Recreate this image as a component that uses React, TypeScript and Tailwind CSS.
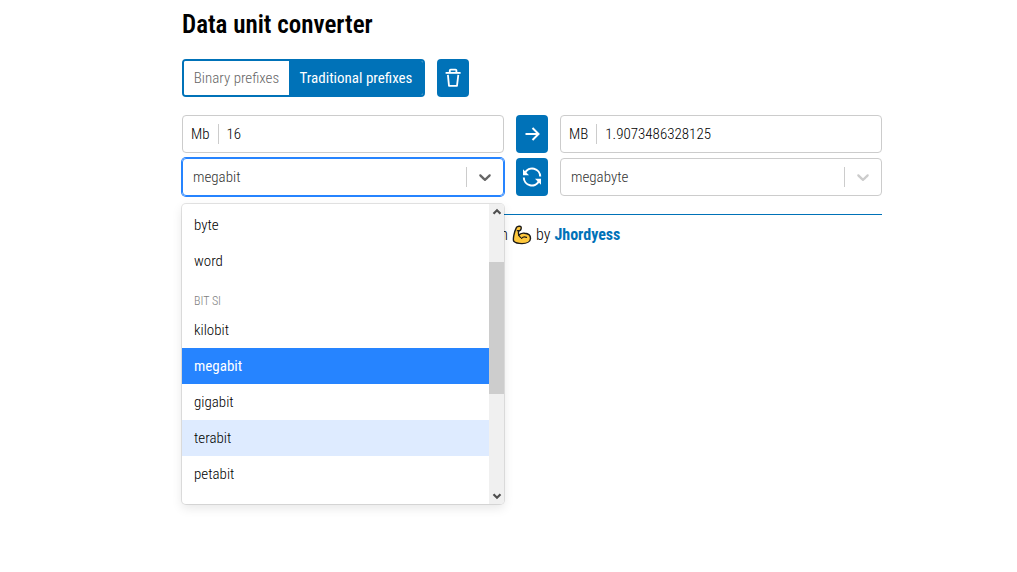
import { useEffect, useRef, useState } from "react"

const unitGroups = [
  {
    label: "Basic",
    units: ["bit", "nibble", "byte", "word"],
  },
  {
    label: "Bit SI",
    units: ["kilobit", "megabit", "gigabit", "terabit", "petabit", "exabit"],
  },
  {
    label: "Byte SI",
    units: ["kilobyte", "megabyte", "gigabyte"],
  },
]

const MENU_SCROLL = 98

function TrashIcon() {
  return (
    <svg viewBox="0 0 24 24" className="h-6 w-6" fill="none" stroke="currentColor" strokeWidth="1.8" strokeLinejoin="round" aria-hidden="true">
      <path d="M4.600 6.900h15" />
      <path d="M8.800 6.900V4.500a.9.9 0 0 1 .9-.9h4.800a.9.9 0 0 1 .9.9v2.400" />
      <path d="M6.900 8.800l1.100 11h8l1.300-11" />
    </svg>
  )
}

function ArrowIcon() {
  return (
    <svg viewBox="0 0 24 24" className="h-6 w-6" fill="none" stroke="currentColor" strokeWidth="2" aria-hidden="true">
      <path d="M5.500 12H18" />
      <path d="M12.500 6l6 6-6 6" />
    </svg>
  )
}

function SwapIcon() {
  return (
    <svg viewBox="0 0 24 24" className="h-6 w-6" fill="none" stroke="currentColor" strokeWidth="2" aria-hidden="true">
      <path d="M5 8a8 8 0 0 1 15.200 3.500" />
      <path d="M19 16a8 8 0 0 1-15.200-3.500" />
      <path d="M3 4.200v6h6z" fill="currentColor" stroke="none" />
      <path d="M21 19.800v-6h-6z" fill="currentColor" stroke="none" />
    </svg>
  )
}

function MuscleIcon() {
  return (
    <svg viewBox="0 0 20 20" className="h-5 w-5" role="img" aria-label="strength">
      <path
        d="M4.500 2.300C5.800 1.100 8.300.9 9 1.800c.7 1-.1 3.500-1.300 3.900L6.600 5.800c-.3 1.700-.2 3.300.2 4.600 1.100-1.700 3.500-2.500 5.800-2.200 3.600.2 6 2.300 5.900 5.200-.1 3.300-4 5.200-8.500 5.200-3.700 0-6.600-.6-8.200-2.300C.6 14.400 2.300 6.400 4.500 2.300z"
        fill="#ffc83d"
        stroke="#1c1a17"
        strokeWidth="1.400"
        strokeLinejoin="round"
      />
      <path d="M5.300 5.700l1.500.1M6.800 10.400c.4 1 1 1.600 1.800 2M9.500 13.300c1.300-1.300 3.200-1.700 5-.9" fill="none" stroke="#1c1a17" strokeWidth="1.200" strokeLinecap="round" />
    </svg>
  )
}

function Chevron({ className }: { className: string }) {
  return (
    <svg viewBox="0 0 20 20" className={className} fill="currentColor" aria-hidden="true">
      <path d="M4.516 7.548c0.436-0.446 1.043-0.481 1.576 0l3.908 3.747 3.908-3.747c0.533-0.481 1.141-0.446 1.574 0 0.436 0.445 0.408 1.197 0 1.615-0.406 0.418-4.695 4.502-4.695 4.502-0.217 0.223-0.502 0.335-0.787 0.335s-0.570-0.112-0.789-0.335c0 0-4.287-4.084-4.695-4.502s-0.436-1.170 0-1.615z" />
    </svg>
  )
}

function ScrollArrow({ className }: { className: string }) {
  return (
    <svg viewBox="0 0 12 12" className={className} fill="none" stroke="currentColor" strokeWidth="2.200" aria-hidden="true">
      <path d="M2.500 4.200L6 7.700l3.500-3.500" />
    </svg>
  )
}

type AmountFieldProps = {
  id: string
  symbol: string
  value: string
  onChange?: (value: string) => void
}

function AmountField({ id, symbol, value, onChange }: AmountFieldProps) {
  return (
    <div className="flex h-[38px] items-center rounded border border-[#cccccc] px-2">
      <label htmlFor={id}>{symbol}</label>
      <span className="mx-2 h-5 w-px bg-[#cccccc]" />
      <input
        id={id}
        value={value}
        readOnly={!onChange}
        onChange={(e) => onChange?.(e.target.value)}
        className="min-w-0 flex-1 bg-transparent outline-none"
      />
    </div>
  )
}

type UnitSelectProps = {
  label: string
  value: string
  active?: boolean
  onChange: (value: string) => void
  onOpen?: () => void
}

function UnitSelect({ label, value, active, onChange, onOpen }: UnitSelectProps) {
  return (
    <div
      className={`relative flex h-[38px] items-center rounded border ${
        active ? "border-[#2684ff] ring-1 ring-[#2684ff]" : "border-[#cccccc]"
      }`}
    >
      <select
        aria-label={label}
        value={value}
        onChange={(e) => onChange(e.target.value)}
        onMouseDown={(e) => {
          if (onOpen) {
            e.preventDefault()
            onOpen()
          }
        }}
        className="h-full w-full appearance-none bg-transparent px-[10px] text-[#333333] outline-none"
      >
        {unitGroups.map((group) => (
          <optgroup key={group.label} label={group.label}>
            {group.units.map((unit) => (
              <option key={unit}>{unit}</option>
            ))}
          </optgroup>
        ))}
      </select>
      <div className="pointer-events-none absolute inset-y-0 right-0 flex items-center">
        <span className="h-5 w-px bg-[#cccccc]" />
        <Chevron className={`mx-2 h-5 w-5 ${active ? "text-[#666666]" : "text-[#cccccc]"}`} />
      </div>
    </div>
  )
}

function UnitMenu({ value, onSelect }: { value: string; onSelect: (value: string) => void }) {
  const listRef = useRef<HTMLDivElement>(null)
  const [hovered, setHovered] = useState("terabit")

  useEffect(() => {
    if (listRef.current) listRef.current.scrollTop = MENU_SCROLL
  }, [])

  return (
    <div className="absolute inset-x-0 top-full z-10 mt-2 flex h-[300px] overflow-hidden rounded bg-white shadow-[0_0_0_1px_rgba(0,0,0,0.1),0_4px_11px_rgba(0,0,0,0.1)]">
      <div ref={listRef} role="listbox" aria-label="Units" className="flex-1 overflow-y-auto py-1 [scrollbar-width:none]">
        {unitGroups.map((group) => (
          <div key={group.label} role="group" aria-label={group.label} className="py-2">
            <div className="mb-1 px-3 text-xs leading-[13px] text-[#808080] uppercase">{group.label}</div>
            {group.units.map((unit) => (
              <button
                key={unit}
                type="button"
                role="option"
                aria-selected={unit === value}
                onMouseEnter={() => setHovered(unit)}
                onClick={() => onSelect(unit)}
                className={`block h-9 w-full px-3 text-left ${
                  unit === value ? "bg-[#2684ff] font-normal text-white" : unit === hovered ? "bg-[#deebff]" : ""
                }`}
              >
                {unit}
              </button>
            ))}
          </div>
        ))}
      </div>

      {/* scrollbar */}
      <div className="flex w-[15px] flex-col items-center bg-[#f0f0f0] text-[#505050]" aria-hidden="true">
        <ScrollArrow className="my-[2px] h-3 w-3 rotate-180" />
        <div className="mt-[42px] h-[132px] w-full bg-[#cdcdcd]" />
        <ScrollArrow className="mt-auto mb-[2px] h-3 w-3" />
      </div>
    </div>
  )
}

export default function App() {
  const [prefix, setPrefix] = useState("traditional")
  const [amount, setAmount] = useState("16")
  const [from, setFrom] = useState("megabit")
  const [to, setTo] = useState("megabyte")
  const [isOpen, setIsOpen] = useState(true)

  const swap = () => {
    setFrom(to)
    setTo(from)
  }

  return (
    <div className="flex min-h-screen justify-center bg-white pl-[47px] font-['Roboto_Condensed','Roboto',sans-serif] text-[15px] font-light text-black">
      <main className="w-full max-w-[700px] pt-2">
        <h1 className="text-[25px] leading-[34px] font-semibold">Data unit converter</h1>

        <div className="mt-[17px] flex gap-3">
          <div className="flex h-[38px] overflow-hidden rounded border-2 border-[#0072b8]">
            <button
              type="button"
              aria-pressed={prefix === "binary"}
              onClick={() => setPrefix("binary")}
              className={`w-[105px] whitespace-nowrap ${prefix === "binary" ? "bg-[#0072b8] text-white" : "bg-white text-[#666666]"}`}
            >
              Binary prefixes
            </button>
            <button
              type="button"
              aria-pressed={prefix === "traditional"}
              onClick={() => setPrefix("traditional")}
              className={`w-[134px] font-normal whitespace-nowrap ${prefix === "traditional" ? "bg-[#0072b8] text-white" : "bg-white text-[#666666]"}`}
            >
              Traditional prefixes
            </button>
          </div>
          <button
            type="button"
            aria-label="Clear"
            onClick={() => setAmount("")}
            className="flex w-8 items-center justify-center rounded bg-[#0072b8] text-white"
          >
            <TrashIcon />
          </button>
        </div>

        <div className="mt-[18px] grid grid-cols-[1fr_32px_1fr] gap-x-3 gap-y-[5px]">
          <AmountField id="from-amount" symbol="Mb" value={amount} onChange={setAmount} />
          <button type="button" aria-label="Convert" className="flex items-center justify-center rounded bg-[#0072b8] text-white">
            <ArrowIcon />
          </button>
          <AmountField id="to-amount" symbol="MB" value="1.9073486328125" />

          <div className="relative">
            <UnitSelect label="From unit" value={from} active={isOpen} onChange={setFrom} onOpen={() => setIsOpen(!isOpen)} />
            {isOpen && (
              <UnitMenu
                value={from}
                onSelect={(unit) => {
                  setFrom(unit)
                  setIsOpen(false)
                }}
              />
            )}
          </div>
          <button type="button" aria-label="Swap units" onClick={swap} className="flex items-center justify-center rounded bg-[#0072b8] text-white">
            <SwapIcon />
          </button>
          <UnitSelect label="To unit" value={to} onChange={setTo} />
        </div>

        <footer className="mt-[18px] flex items-center justify-center gap-1 border-t border-[#0072b8] pt-2 text-base">
          <span>Made with</span>
          <MuscleIcon />
          <span>by</span>
          <a href="#jhordyess" className="font-bold text-[#0072b8]">
            Jhordyess
          </a>
        </footer>
      </main>
    </div>
  )
}
